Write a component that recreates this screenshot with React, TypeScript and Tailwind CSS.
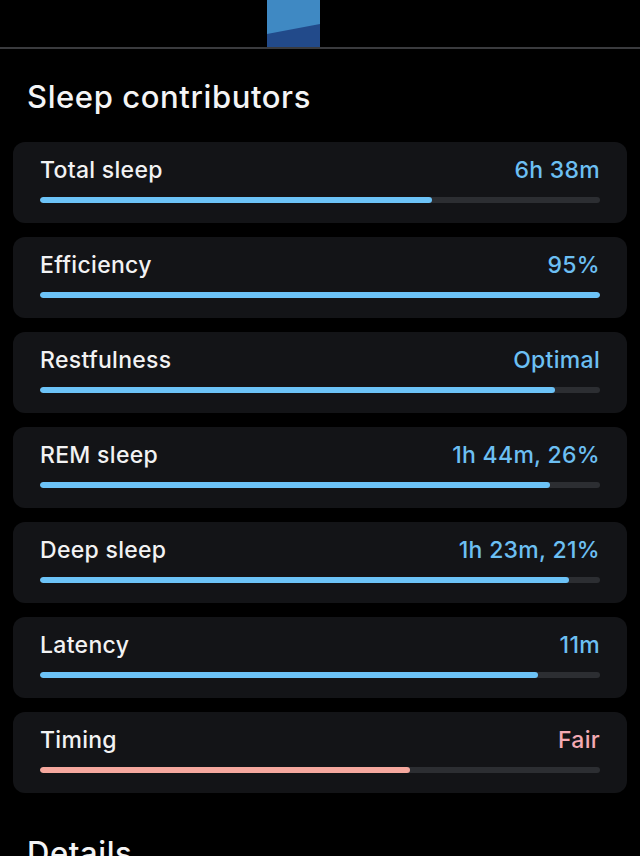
import React from "react";

type Row = { label: string; value: string; pct: number; tone?: "blue" | "pink" };

const rows: Row[] = [
  { label: "Total sleep", value: "6h 38m", pct: 70 },
  { label: "Efficiency", value: "95%", pct: 100 },
  { label: "Restfulness", value: "Optimal", pct: 92 },
  { label: "REM sleep", value: "1h 44m, 26%", pct: 91 },
  { label: "Deep sleep", value: "1h 23m, 21%", pct: 94.5 },
  { label: "Latency", value: "11m", pct: 89 },
  { label: "Timing", value: "Fair", pct: 66, tone: "pink" },
];

export default function App() {
  return (
    <div
      className="w-[640px] h-[856px] overflow-hidden bg-black text-white"
      style={{ fontFamily: "Inter, 'Noto Sans', sans-serif" }}
    >
      <div className="h-[47px] pl-[267px] flex">
        <svg width="53" height="47" viewBox="0 0 53 47" className="block">
          <rect x="0" y="0" width="53" height="47" fill="#3f89c3" />
          <polygon points="0,34 53,24 53,47 0,47" fill="#224a8a" />
        </svg>
      </div>
      <div className="h-[2px] bg-[#3a3b3e]" />
      <h2 className="pl-[27px] pt-[28px] text-[31px] leading-[40px] font-medium tracking-[0.6px] text-[#f4f4f5]">
        Sleep contributors
      </h2>
      <div className="mt-[25px] px-[13px] flex flex-col gap-[14px]">
        {rows.map((r) => (
          <div key={r.label} className="h-[81px] rounded-[12px] bg-[#131417] px-[27px] pt-[13px]">
            <div className="flex justify-between items-center h-[30px]">
              <span className="text-[23px] font-medium text-[#f2f2f3] tracking-[0.3px]">{r.label}</span>
              <span
                className={
                  r.tone === "pink"
                    ? "text-[23px] font-medium text-[#f4aab3] tracking-[0.3px]"
                    : "text-[23px] font-medium text-[#6cbff2] tracking-[0.3px]"
                }
              >
                {r.value}
              </span>
            </div>
            <div className="mt-[12px] h-[6px] rounded-full bg-[#2c2e32] overflow-hidden">
              <div
                className={r.tone === "pink" ? "h-full rounded-full bg-[#f5a89e]" : "h-full rounded-full bg-[#6cc3f7]"}
                style={{ width: `${r.pct}%` }}
              />
            </div>
          </div>
        ))}
      </div>
      <h2 className="pl-[27px] mt-[40px] text-[31px] leading-[40px] font-medium tracking-[0.6px] text-[#f4f4f5]">
        Details
      </h2>
    </div>
  );
}
